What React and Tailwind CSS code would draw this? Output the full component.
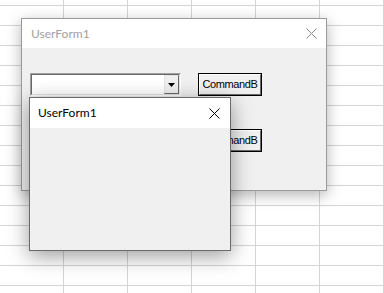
const titleFont = { fontFamily: '"Segoe UI", Lato, "Noto Sans", sans-serif' };

const CloseIcon = ({ color }) => (
  <svg width="11" height="11" viewBox="0 0 11 11">
    <path d="M0.5 0.5 L10.5 10.5 M10.5 0.5 L0.5 10.5" stroke={color} strokeWidth="1" fill="none" />
  </svg>
);

const CommandButton = ({ children }) => (
  <div className="w-[64px] h-[23px] border border-black bg-[#f0f0f0]">
    <div className="h-full border-t border-l border-white border-r border-b border-r-[#696969] border-b-[#696969] flex items-center justify-center overflow-hidden">
      <span className="text-[11px] leading-none text-black tracking-[-0.4px] whitespace-nowrap font-['Liberation_Sans',Arial,sans-serif]">
        {children}
      </span>
    </div>
  </div>
);

const ComboBox = () => (
  <div className="w-[151px] h-[23px] border-t border-l border-[#a0a0a0] border-r border-b border-r-white border-b-white">
    <div className="h-full border-t border-l border-[#696969] border-r border-b border-r-[#e3e3e3] border-b-[#e3e3e3] bg-white flex justify-end">
      <div className="w-[15px] h-full bg-[#f0f0f0] border-t border-l border-[#e3e3e3] border-r border-b border-r-[#696969] border-b-[#696969] flex items-center justify-center">
        <svg width="7" height="4" viewBox="0 0 7 4">
          <path d="M0 0 H7 L3.5 4 Z" fill="#000" />
        </svg>
      </div>
    </div>
  </div>
);

export default function App() {
  return (
    <div className="relative w-[384px] h-[293px] overflow-hidden bg-white bg-[linear-gradient(to_right,#d4d4d4_1px,transparent_1px),linear-gradient(to_bottom,#d4d4d4_1px,transparent_1px)] bg-[size:64px_20px] bg-[position:63px_5px]">
      {/* Back (inactive) form */}
      <div className="absolute left-[21px] top-[18px] w-[306px] h-[173px] border border-[#9a9a9a] bg-[#f0f0f0] flex flex-col shadow-[0_4px_14px_rgba(0,0,0,0.3)]">
        <div className="h-[29px] bg-white flex items-center justify-between pl-[9px] pr-[9px]">
          <span className="text-[12px] text-[#a0a0a0]" style={titleFont}>UserForm1</span>
          <CloseIcon color="#8a8a8a" />
        </div>
        <div className="flex pl-[8px] pt-[25px] gap-[17px]">
          <ComboBox />
          <div className="flex flex-col gap-[33px]">
            <CommandButton>CommandB</CommandButton>
            <CommandButton>CommandB</CommandButton>
          </div>
        </div>
      </div>

      {/* Front (active) form */}
      <div className="absolute left-[29px] top-[97px] w-[202px] h-[154px] border border-[#6a6a6a] bg-[#f0f0f0] flex flex-col shadow-[0_5px_20px_rgba(0,0,0,0.4)]">
        <div className="h-[30px] bg-white flex items-center justify-between pl-[8px] pr-[10px]">
          <span className="text-[12px] text-black" style={titleFont}>UserForm1</span>
          <CloseIcon color="#000" />
        </div>
      </div>
    </div>
  );
}
